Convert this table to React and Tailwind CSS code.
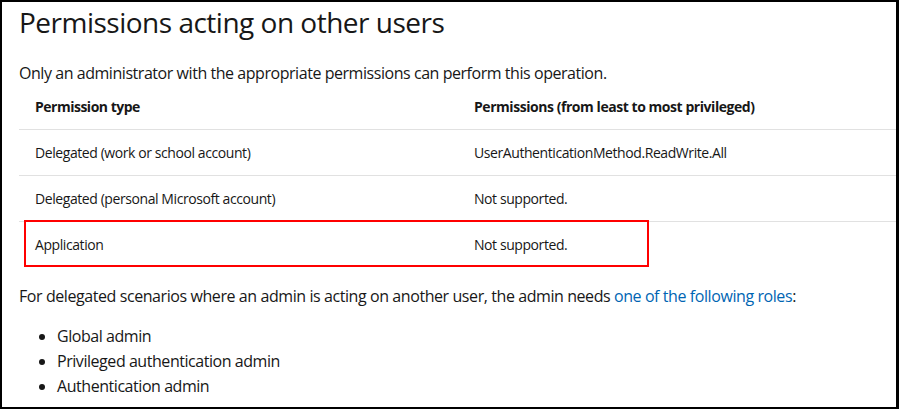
import React from "react";

const rows = [
  { type: "Delegated (work or school account)", perms: "UserAuthenticationMethod.ReadWrite.All" },
  { type: "Delegated (personal Microsoft account)", perms: "Not supported." },
  { type: "Application", perms: "Not supported." },
];

const roles = ["Global admin", "Privileged authentication admin", "Authentication admin"];

export default function App() {
  return (
    <div
      className="relative w-[899px] h-[409px] overflow-hidden bg-white text-[#171717] border-black border-t-2 border-l-2 border-r-[3px] border-b-2 pl-[17px]"
      style={{ fontFamily: '"Open Sans", "Noto Sans", sans-serif' }}
    >
      <h1 className="text-[28px] leading-[40px] font-normal tracking-[-0.5px]">Permissions acting on other users</h1>

      <p className="mt-[19px] text-[16px] leading-[24px] tracking-[-0.45px]">
        Only an administrator with the appropriate permissions can perform this operation.
      </p>

      <table className="w-[900px] border-collapse text-[14px] leading-[20px] tracking-[-0.42px]">
        <thead>
          <tr className="border-b border-[#e1e1e1]">
            <th className="w-[439px] text-left font-bold pl-4 pt-3 pb-3 tracking-[-0.5px]">Permission type</th>
            <th className="text-left font-bold pl-4 pt-3 pb-3 tracking-[-0.45px]">Permissions (from least to most privileged)</th>
          </tr>
        </thead>
        <tbody>
          {rows.map((r, i) => (
            <tr key={r.type} className={i < rows.length - 1 ? "border-b border-[#e1e1e1]" : ""}>
              <td className="pl-4 pt-[13px] pb-3">{r.type}</td>
              <td className="pl-4 pt-[13px] pb-3">{r.perms}</td>
            </tr>
          ))}
        </tbody>
      </table>

      {/* red highlight around the Application row */}
      <div className="absolute left-[22px] top-[218px] w-[625px] h-[47px] border-2 border-[#ff0000]" />

      <p className="mt-[17px] text-[16px] leading-[24px] tracking-[-0.42px]">
        For delegated scenarios where an admin is acting on another user, the admin needs{" "}
        <a className="text-[#0065b3]">one of the following roles</a>:
      </p>

      <ul className="mt-4 list-disc pl-[38px] text-[16px] leading-[25px] tracking-[-0.45px]">
        {roles.map((r) => (
          <li key={r}>{r}</li>
        ))}
      </ul>
    </div>
  );
}
